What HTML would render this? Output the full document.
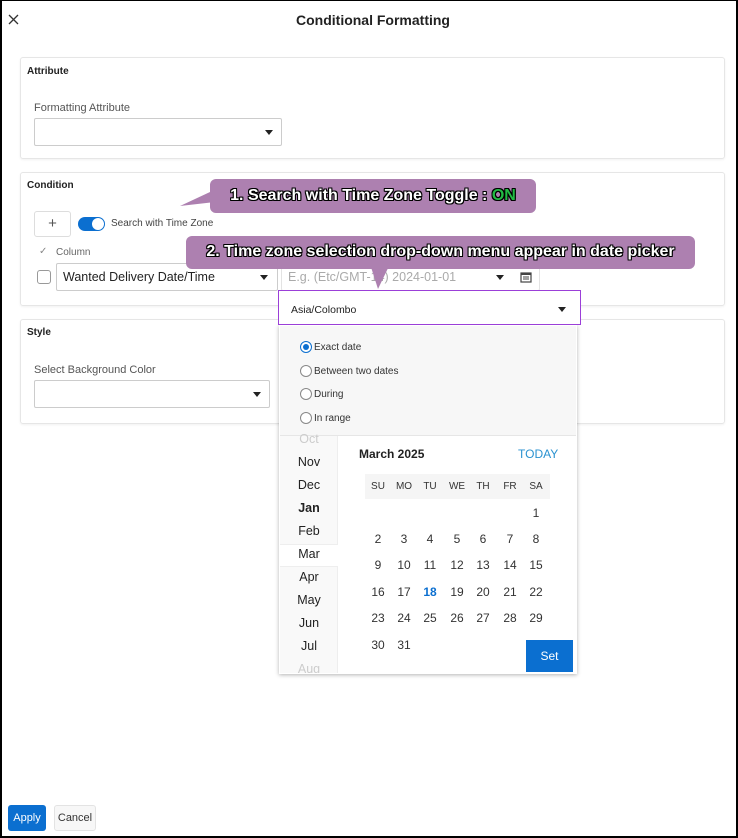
<!DOCTYPE html>
<html><head><meta charset="utf-8"><style>
*{box-sizing:border-box;margin:0;padding:0}
body{width:738px;height:838px;position:relative;background:#fff;font-family:"Liberation Sans",sans-serif;color:#222;overflow:hidden}
.a{position:absolute}
.frame{left:0;top:0;width:738px;height:838px;border:2px solid #000;border-top:1px solid #000}
.panel{border:1px solid #e6e6e6;border-radius:3px;box-shadow:0 1px 2px rgba(0,0,0,.06)}
.h{font-size:10px;font-weight:bold;color:#222}
.lbl{font-size:11px;color:#555}
.sel{border:1px solid #ccc;border-radius:2px;background:#fff}
.tri{width:0;height:0;border-left:4px solid transparent;border-right:4px solid transparent;border-top:5px solid #222}
.call{background:#ad80b0;border-radius:6px;color:#fff;font-weight:bold;font-size:16px;text-align:center;
 text-shadow:-1px -1px 0 #000,1px -1px 0 #000,-1px 1px 0 #000,1px 1px 0 #000,0 1px 0 #000,0 -1px 0 #000,1px 0 0 #000,-1px 0 0 #000}
.d{position:absolute;width:26px;text-align:center;font-size:12px;color:#333}
.m{position:absolute;left:280px;width:58px;text-align:center;font-size:12.5px;color:#222}
.r{position:absolute;left:300px;font-size:10px;color:#333}
.rc{position:absolute;left:300px;width:12px;height:12px;border:1px solid #888;border-radius:50%;background:#fff}
</style></head><body>
<svg class="a" style="left:8px;top:14px" width="11" height="11" viewBox="0 0 11 11"><path d="M1 1L10 10M10 1L1 10" stroke="#333" stroke-width="1.3"/></svg>
<div class="a" style="left:0;width:746px;top:12px;text-align:center;font-size:14px;font-weight:bold">Conditional Formatting</div>

<div class="a panel" style="left:20px;top:57px;width:705px;height:102px"></div>
<div class="a h" style="left:27px;top:66px">Attribute</div>
<div class="a lbl" style="left:34px;top:102px">Formatting Attribute</div>
<div class="a sel" style="left:34px;top:118px;width:248px;height:28px"><div class="a tri" style="left:230px;top:11px"></div></div>

<div class="a panel" style="left:20px;top:172px;width:705px;height:134px"></div>
<div class="a h" style="left:27px;top:180px">Condition</div>
<div class="a" style="left:34px;top:211px;width:37px;height:26px;border:1px solid #ddd;border-radius:3px;text-align:center;font-size:15px;line-height:23px;color:#555">+</div>
<div class="a" style="left:78px;top:217px;width:27px;height:14px;border-radius:7px;background:#0b6fd0"><div class="a" style="left:14px;top:1px;width:12px;height:12px;border-radius:50%;background:#fff"></div></div>
<div class="a" style="left:111px;top:218px;font-size:10px;color:#444">Search with Time Zone</div>
<div class="a" style="left:39px;top:246px;font-size:10px;color:#888">✓</div>
<div class="a" style="left:56px;top:247px;font-size:10px;color:#666">Column</div>
<div class="a" style="left:37px;top:270px;width:14px;height:14px;border:1px solid #999;border-radius:3px"></div>
<div class="a sel" style="left:56px;top:263px;width:222px;height:28px"><div class="a" style="left:6px;top:6px;font-size:12.5px;color:#222">Wanted Delivery Date/Time</div><div class="a tri" style="left:203px;top:11px"></div></div>
<div class="a sel" style="left:281px;top:263px;width:259px;height:28px;border-color:#e3e3e3"><div class="a" style="left:6px;top:6px;font-size:12.5px;color:#aaa">E.g. (Etc/GMT-14) 2024-01-01</div><div class="a tri" style="left:214px;top:11px"></div>
<svg class="a" style="left:238px;top:7px" width="12" height="12" viewBox="0 0 12 12"><rect x="1" y="2" width="10" height="9" fill="none" stroke="#444" stroke-width="1.2"/><rect x="1" y="2" width="10" height="2" fill="#444"/><path d="M3 6h6M3 8h6" stroke="#444"/></svg></div>

<div class="a panel" style="left:20px;top:319px;width:705px;height:105px"></div>
<div class="a h" style="left:27px;top:327px">Style</div>
<div class="a lbl" style="left:34px;top:364px">Select Background Color</div>
<div class="a sel" style="left:34px;top:380px;width:236px;height:28px"><div class="a tri" style="left:218px;top:11px"></div></div>

<div class="a" style="left:279px;top:325px;width:298px;height:349px;background:#fff;box-shadow:0 1px 4px rgba(0,0,0,.3)"></div>
<div class="a" style="left:278px;top:290px;width:303px;height:35px;border:1px solid #9b3fd8;background:#fff"><div class="a" style="left:12px;top:13px;font-size:10.5px;color:#222">Asia/Colombo</div><div class="a tri" style="left:279px;top:16px"></div></div>
<div class="a" style="left:280px;top:326px;width:296px;height:110px;background:#f7f7f7;border-bottom:1px solid #e6e6e6"></div>
<div class="rc" style="top:341px;border-color:#0b6fd0"><div class="a" style="left:2px;top:2px;width:6px;height:6px;border-radius:50%;background:#0b6fd0"></div></div>
<div class="r" style="left:314px;top:342px">Exact date</div>
<div class="rc" style="top:365px"></div><div class="r" style="left:314px;top:366px">Between two dates</div>
<div class="rc" style="top:388px"></div><div class="r" style="left:314px;top:389px">During</div>
<div class="rc" style="top:412px"></div><div class="r" style="left:314px;top:413px">In range</div>

<div class="a" style="left:280px;top:436px;width:58px;height:237px;background:#f9f9f9;border-right:1px solid #eee"></div>
<div class="a" style="left:280px;top:544px;width:58px;height:23px;background:#fff;border-top:1px solid #eee;border-bottom:1px solid #eee"></div>
<div class="m" style="top:432px;color:#ccc">Oct</div>
<div class="m" style="top:455px">Nov</div>
<div class="m" style="top:478px">Dec</div>
<div class="m" style="top:501px;font-weight:bold">Jan</div>
<div class="m" style="top:524px">Feb</div>
<div class="m" style="top:547px">Mar</div>
<div class="m" style="top:570px">Apr</div>
<div class="m" style="top:593px">May</div>
<div class="m" style="top:616px">Jun</div>
<div class="m" style="top:639px">Jul</div>
<div class="m" style="top:662px;color:#ccc;height:11px;overflow:hidden">Aug</div>

<div class="a" style="left:359px;top:447px;font-size:12px;font-weight:bold">March 2025</div>
<div class="a" style="left:518px;top:447px;font-size:12px;color:#2a92d0">TODAY</div>
<div class="a" style="left:365px;top:474px;width:185px;height:25px;background:#f5f5f5"></div>
<div class="d" style="left:365px;top:481px;font-size:10px">SU</div><div class="d" style="left:391px;top:481px;font-size:10px">MO</div><div class="d" style="left:417px;top:481px;font-size:10px">TU</div><div class="d" style="left:444px;top:481px;font-size:10px">WE</div><div class="d" style="left:470px;top:481px;font-size:10px">TH</div><div class="d" style="left:497px;top:481px;font-size:10px">FR</div><div class="d" style="left:523px;top:481px;font-size:10px">SA</div>
<div class="d" style="left:523px;top:506px">1</div>
<div class="d" style="left:365px;top:532px">2</div><div class="d" style="left:391px;top:532px">3</div><div class="d" style="left:417px;top:532px">4</div><div class="d" style="left:444px;top:532px">5</div><div class="d" style="left:470px;top:532px">6</div><div class="d" style="left:497px;top:532px">7</div><div class="d" style="left:523px;top:532px">8</div>
<div class="d" style="left:365px;top:558px">9</div><div class="d" style="left:391px;top:558px">10</div><div class="d" style="left:417px;top:558px">11</div><div class="d" style="left:444px;top:558px">12</div><div class="d" style="left:470px;top:558px">13</div><div class="d" style="left:497px;top:558px">14</div><div class="d" style="left:523px;top:558px">15</div>
<div class="d" style="left:365px;top:585px">16</div><div class="d" style="left:391px;top:585px">17</div><div class="d" style="left:417px;top:585px;color:#0b6fd0;font-weight:bold">18</div><div class="d" style="left:444px;top:585px">19</div><div class="d" style="left:470px;top:585px">20</div><div class="d" style="left:497px;top:585px">21</div><div class="d" style="left:523px;top:585px">22</div>
<div class="d" style="left:365px;top:611px">23</div><div class="d" style="left:391px;top:611px">24</div><div class="d" style="left:417px;top:611px">25</div><div class="d" style="left:444px;top:611px">26</div><div class="d" style="left:470px;top:611px">27</div><div class="d" style="left:497px;top:611px">28</div><div class="d" style="left:523px;top:611px">29</div>
<div class="d" style="left:365px;top:638px">30</div><div class="d" style="left:391px;top:638px">31</div>
<div class="a" style="left:526px;top:640px;width:47px;height:32px;background:#0b6fd0;color:#fff;font-size:12px;text-align:center;line-height:32px">Set</div>

<svg class="a" style="left:170px;top:190px" width="60" height="25"><path d="M40 2 L10 16 L45 12 Z" fill="#ad80b0"/></svg>
<div class="a call" style="left:210px;top:179px;width:326px;height:34px;line-height:34px">1. Search with Time Zone Toggle : <span style="color:#22bb44">ON</span></div>
<svg class="a" style="left:360px;top:262px" width="40" height="30"><path d="M10 2 L18 27 L30 2 Z" fill="#ad80b0"/></svg>
<div class="a call" style="left:186px;top:236px;width:509px;height:33px;line-height:32px">2. Time zone selection drop-down menu appear in date picker</div>

<div class="a" style="left:8px;top:805px;width:38px;height:26px;background:#0b6fd0;border-radius:3px;color:#fff;font-size:11px;text-align:center;line-height:26px">Apply</div>
<div class="a" style="left:54px;top:805px;width:42px;height:26px;background:#f7f7f7;border:1px solid #e3e3e3;border-radius:3px;color:#333;font-size:11px;text-align:center;line-height:24px">Cancel</div>
<div class="a frame"></div>
</body></html>
